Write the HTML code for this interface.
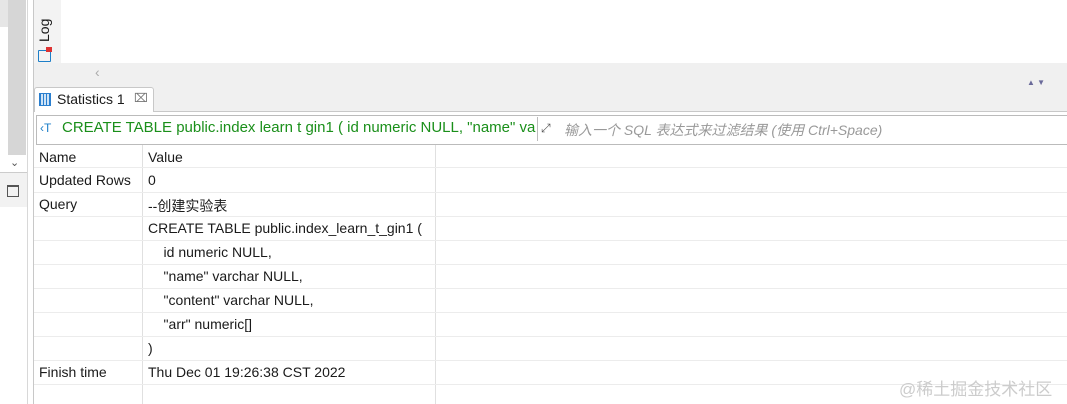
<!DOCTYPE html>
<html><head><meta charset="utf-8"><style>
body{margin:0;width:1067px;height:404px;position:relative;overflow:hidden;background:#fff;font-family:"Liberation Sans","Noto Sans CJK SC",sans-serif;font-size:14px;color:#1a1a1a}
.a{position:absolute}
.row{position:absolute;left:34px;width:1033px;height:24px;border-bottom:1px solid #ececec}
.row span{position:absolute;top:4px}
.c1{left:5px}.c2{left:114px}
</style></head><body>
<div class="a" style="left:8px;top:0;width:18px;height:155px;background:#d6d6d6"></div>
<div class="a" style="left:0;top:0;width:8px;height:27px;background:#e6e6e6"></div>
<div class="a" style="left:10px;top:156px;font-size:11px;color:#555">&#8964;</div>
<div class="a" style="left:0;top:172px;width:27px;height:1px;background:#ccc"></div>
<div class="a" style="left:0;top:173px;width:27px;height:34px;background:#f2f2f2"></div>
<div class="a" style="left:7px;top:185px;width:10px;height:9px;border:1px solid #555;border-top-width:2px"></div>
<div class="a" style="left:27px;top:0;width:1px;height:404px;background:#d8d8d8"></div>
<div class="a" style="left:33px;top:0;width:1px;height:404px;background:#c8c8c8"></div>
<div class="a" style="left:34px;top:0;width:27px;height:63px;background:#f3f3f3"></div>
<div class="a" style="left:36px;top:42px;transform:rotate(-90deg);transform-origin:left top;font-size:14px">Log</div>
<div class="a" style="left:38px;top:50px;width:11px;height:10px;border:1.5px solid #1e7fc8;border-radius:1px"></div>
<div class="a" style="left:46px;top:47px;width:6px;height:5px;background:#d33"></div>
<div class="a" style="left:34px;top:63px;width:1033px;height:24px;background:#f0f0f0"></div>
<div class="a" style="left:95px;top:64px;color:#aaa;font-size:14px">&#8249;</div>
<div class="a" style="left:1027px;top:78px;font-size:8px;color:#6a6a9a">&#9650; &#9660;</div>
<div class="a" style="left:34px;top:87px;width:1033px;height:24px;background:#f0f0f0;border-bottom:1px solid #c8c8c8"></div>
<div class="a" style="left:34px;top:87px;width:118px;height:24px;background:#fff;border:1px solid #c8c8c8;border-bottom:none;border-radius:3px 3px 0 0"></div>
<div class="a" style="left:39px;top:93px;width:10px;height:11px;background:repeating-linear-gradient(90deg,#2a7fcf 0 1px,#cfe4f7 1px 3px),#cfe4f7;border:1px solid #2a7fcf"></div>
<div class="a" style="left:57px;top:91px">Statistics 1</div>
<div class="a" style="left:134px;top:91px;color:#777;font-size:12px">&#8999;</div>
<div class="a" style="left:36px;top:115px;width:1031px;height:28px;border:1px solid #bbb;border-right:none;background:#fff"></div>
<div class="a" style="left:40px;top:121px;color:#1e7fc8;font-size:12px">&#8249;T</div>
<div class="a" style="left:62px;top:119px;color:#1a8f1a;white-space:nowrap;font-size:15px">CREATE TABLE public.index learn t gin1 ( id numeric NULL, "name" va</div>
<div class="a" style="left:537px;top:117px;width:1px;height:24px;background:#bbb"></div>
<div class="a" style="left:541px;top:121px;color:#555;font-size:12px">&#10530;</div>
<div class="a" style="left:564px;top:120px;color:#999;font-style:italic;font-size:14px;white-space:nowrap">输入一个 SQL 表达式来过滤结果 (使用 Ctrl+Space)</div>
<div class="a" style="left:142px;top:145px;width:1px;height:259px;background:#e0e0e0"></div>
<div class="a" style="left:435px;top:145px;width:1px;height:259px;background:#e0e0e0"></div>
<div class="row" style="top:145px;height:22px"><span class="c1">Name</span><span class="c2">Value</span></div>
<div class="row" style="top:168px"><span class="c1">Updated Rows</span><span class="c2">0</span></div>
<div class="row" style="top:192px"><span class="c1">Query</span><span class="c2">--创建实验表</span></div>
<div class="row" style="top:216px"><span class="c2">CREATE TABLE public.index_learn_t_gin1 (</span></div>
<div class="row" style="top:240px"><span class="c2">&nbsp;&nbsp;&nbsp;&nbsp;id numeric NULL,</span></div>
<div class="row" style="top:264px"><span class="c2">&nbsp;&nbsp;&nbsp;&nbsp;"name" varchar NULL,</span></div>
<div class="row" style="top:288px"><span class="c2">&nbsp;&nbsp;&nbsp;&nbsp;"content" varchar NULL,</span></div>
<div class="row" style="top:312px"><span class="c2">&nbsp;&nbsp;&nbsp;&nbsp;"arr" numeric[]</span></div>
<div class="row" style="top:336px"><span class="c2">)</span></div>
<div class="row" style="top:360px"><span class="c1">Finish time</span><span class="c2">Thu Dec 01 19:26:38 CST 2022</span></div>
<div class="a" style="left:899px;top:375px;color:#ccc;font-size:17px;white-space:nowrap">@稀土掘金技术社区</div>
</body></html>
